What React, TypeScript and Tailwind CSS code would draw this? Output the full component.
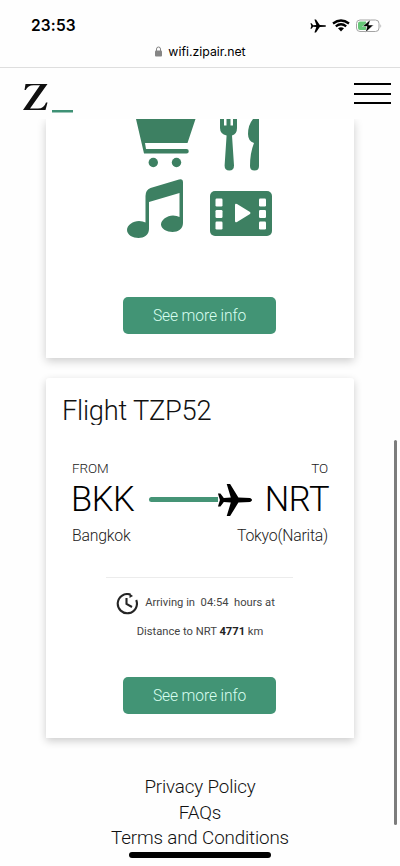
import React from "react";

function Plane({ className }: { className: string }) {
  return (
    <svg className={className} viewBox="0 0 36 34" fill="currentColor" preserveAspectRatio="none">
      <path d="M34 15c1.300.5 2 1.200 2 2s-.7 1.500-2 2l-12 .6-8.500 13.400H10l4.200-13.400-7.200-.5-3.500 4.400H1L3 17 1 10.500h2.500L7 14.900l7.200-.5L10 1h3.500L22 14.400z" />
    </svg>
  );
}

function StatusBar() {
  return (
    <div className="flex h-[42px] items-center justify-between pt-[9px] pr-[18px] pl-[31px]">
      <span className="font-['Inter'] text-[15.5px] font-semibold tracking-[0.15px]">23:53</span>
      <div className="flex items-center">
        <Plane className="h-[14px] w-[16px]" />
        <svg className="ml-[6px] h-[13px] w-[18px]" viewBox="0 0 18 13">
          <path d="M1 4.500Q9-1.500 17 4.500M3.800 7.300Q9 3.200 14.200 7.300" fill="none" stroke="black" strokeWidth="2.300" />
          <path d="M6 9.300Q9 7.200 12 9.300L9 12.500z" />
        </svg>
        <svg className="ml-[6px] h-[14px] w-[26px]" viewBox="0 0 26 14">
          <rect x=".5" y="1" width="22.500" height="11.500" rx="3.500" fill="white" stroke="#a4a4a4" />
          <path d="M4 2.500h6v8.500H4a2 2 0 0 1-2-2v-4.500a2 2 0 0 1 2-2z" fill="#66c778" />
          <path d="M24.500 5v4q1.500-2 0-4" fill="#999" />
          <path d="M14.500.5 6.500 7.500h4.500L9.500 13.500l8-7.500h-4.800z" stroke="white" strokeWidth=".5" />
        </svg>
      </div>
    </div>
  );
}

function FeatureIcons() {
  return (
    <svg className="h-[122px] w-[154px]" viewBox="0 0 154 122" fill="#3d8062">
      <path d="M13 0h59.500l-8 24H22l1 6h40.500a2 2 0 0 1 0 4.500H21z" />
      <circle cx="30.300" cy="43.500" r="4.700" />
      <circle cx="53.500" cy="43.500" r="4.700" />
      <path d="M97 0h4v6.500h2.500V0h4v6.500h2.500V0h4v9q0 6-5 7.500l2 30q0 5-4.700 5t-4.700-5l2-30Q97 15 97 9z" />
      <path d="M130 0h6v47q0 4.500-4.500 4.500t-4.500-4.500q0-13 4-23-6-2-6-9 0-9 5-15z" />
      <path fillRule="evenodd" d="M27.500 69 56 60.500q4-1 4 3V104c0 6-5 9-10.500 9S38 110 38 105.500s6-9 12-9q4 0 6.500 1.500V74L26 83v27c0 6-5 9-10.500 9S4 116 4 111s6-9 12-9q4 0 6.500 1.500V77q0-6 5-8z" />
      <rect x="87" y="72" width="62" height="45" rx="5" />
      <g fill="white">
        <rect x="92.500" y="79.500" width="7" height="8" rx="1.200" />
        <rect x="92.500" y="91" width="7" height="8" rx="1.200" />
        <rect x="92.500" y="102.500" width="7" height="8" rx="1.200" />
        <rect x="136" y="79.500" width="7" height="8" rx="1.200" />
        <rect x="136" y="91" width="7" height="8" rx="1.200" />
        <rect x="136" y="102.500" width="7" height="8" rx="1.200" />
        <path d="M112 86q0-2 2-1l13 8q1 1 0 2l-13 8q-2 1-2-1z" />
      </g>
    </svg>
  );
}

function InfoButton() {
  return (
    <button className="mr-px h-[37px] w-[153px] shrink-0 rounded-[5px] bg-[#429475] pt-[2px] text-[15.6px] font-light tracking-[-0.12px] text-[#d9fff0]">
      See more info
    </button>
  );
}

const cardShadow = "bg-white shadow-[0_3px_9px_rgba(0,0,0,0.2)]";

export default function App() {
  return (
    <div className="relative flex h-[866px] w-[400px] flex-col overflow-hidden bg-[#fefefe] font-['Roboto',sans-serif] text-black">
      <header className="shrink-0">
        <StatusBar />
        <div className="flex h-[26px] items-start justify-center gap-[6px] border-b border-[#dedede] pt-[1px] pl-[1px] font-['Inter'] text-[12.3px] leading-[17px]">
          <svg className="mt-[3px] h-[11px] w-[7px]" viewBox="0 0 7 11">
            <path d="M1.500 5V3a2 2 0 0 1 4 0v2" fill="none" stroke="#858585" />
            <rect y="4.500" width="7" height="6" rx="1" fill="#858585" />
          </svg>
          <span>wifi.zipair.net</span>
        </div>
        <nav className="flex h-[51px] justify-between pr-[9px] pl-[23px]">
          <svg className="mt-[15px] h-[32px] w-[51px]" viewBox="0 0 51 32" aria-label="Z_">
            <path d="M2.500 1h22L7 25.500h8q6 0 8-6h1.500L22.500 27H0L17 2.300h-6.500Q4.800 2.300 2.800 7H1.500z" fill="#101010" />
            <path d="M29 27h21v2.500H29z" fill="#3e9175" />
          </svg>
          <div className="mt-[15px] flex h-[21px] w-[37px] flex-col justify-between">
            <div className="h-[2px] bg-black" />
            <div className="h-[2px] bg-black" />
            <div className="h-[2px] bg-black" />
          </div>
        </nav>
      </header>
      <main className="flex h-[640px] shrink-0 flex-col gap-5 overflow-hidden px-[46px]">
        <section className={`flex h-[239px] shrink-0 flex-col items-center justify-between pb-[24px] ${cardShadow}`}>
          <FeatureIcons />
          <InfoButton />
        </section>
        <section className={`flex h-[360px] shrink-0 flex-col items-center rounded-t-[3px] ${cardShadow}`}>
          <h1 className="mt-[18px] h-[29px] w-full overflow-hidden pl-[16px] text-[27.3px] leading-[31px] font-light tracking-[-0.25px] whitespace-nowrap text-[#111]">Flight TZP52</h1>
          <div className="mt-[34px] flex w-[256px] justify-between text-[13.5px] leading-[18px] font-light tracking-[-0.1px] text-[#222]">
            <span>FROM</span>
            <span>TO</span>
          </div>
          <div className="flex h-[45px] w-[258px] items-center justify-between text-[34.5px] font-light tracking-[-0.5px]">
            <span className="w-[63px]">BKK</span>
            <div className="flex flex-1 items-center pl-[15px]">
              <div className="h-[5px] w-[69px] rounded-l-full bg-[#459476]" />
              <Plane className="-ml-px h-[34px] w-[35px]" />
            </div>
            <span>NRT</span>
          </div>
          <div className="mt-[2px] flex w-[256px] justify-between text-[15.8px] leading-[24px] font-light tracking-[-0.22px] text-[#222]">
            <span>Bangkok</span>
            <span>Tokyo(Narita)</span>
          </div>
          <div className="mt-[29px] mr-[2px] h-px w-[187px] bg-[#ececec]" />
          <div className="mt-[14px] mr-[9px] flex h-[23px] items-center gap-[7px] text-[11.2px] text-[#444]">
            <svg className="h-[22px] w-[22px]" viewBox="0 0 22 22" fill="none" stroke="#252525" strokeWidth="2.100">
              <path d="M20.200 7A9.600 9.600 0 1 1 14.500 1.600M10.500 5v6l5.500 3" />
              <path d="m13.500.5 3.500 2.500-3.500 2" fill="#252525" stroke="none" />
            </svg>
            <span className="whitespace-pre">Arriving in  04:54  hours at</span>
          </div>
          <p className="mt-[7px] text-[11.2px] leading-[20px] text-[#444]">Distance to NRT <b className="text-[#222]">4771</b> km</p>
          <div className="mt-auto mb-[24px] flex"><InfoButton /></div>
        </section>
      </main>
      <footer className="mt-[16px] flex shrink-0 flex-col items-center text-[18.8px] leading-[25.500px] font-light tracking-[-0.15px] text-[#111]">
        <a>Privacy Policy</a>
        <a>FAQs</a>
        <a>Terms and Conditions</a>
      </footer>
      <div className="absolute top-[440px] right-[3px] h-[385px] w-[3px] rounded-full bg-[#7c7c7c]" />
      <div className="absolute top-[852px] left-[129px] h-[6px] w-[142px] rounded-full bg-black" />
    </div>
  );
}
